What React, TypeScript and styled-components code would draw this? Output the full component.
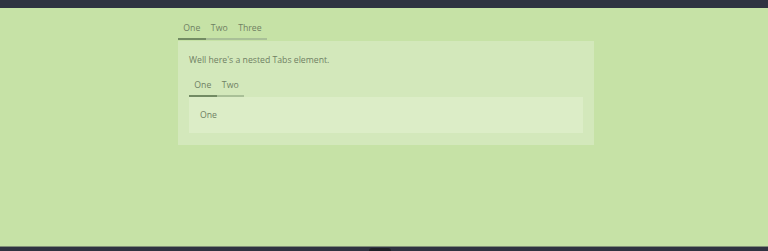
import React, { useState } from "react";
import styled, { createGlobalStyle } from "styled-components";

const GlobalStyle = createGlobalStyle`
  html, body {
    margin: 0;
    padding: 0;
    background: #c6e2a6;
  }
  body {
    font-family: "Open Sans", "Liberation Sans", sans-serif;
  }
`;

type TabsProps = {
  labels: string[];
  panels: React.ReactNode[];
  inner?: boolean;
};

const Tabs = ({ labels, panels, inner }: TabsProps) => {
  const [active, setActive] = useState(0);
  return (
    <TabsBox $inner={inner}>
      <TabList>
        {labels.map((label, i) => (
          <Tab key={label} $active={i === active} onClick={() => setActive(i)}>
            {label}
          </Tab>
        ))}
      </TabList>
      <Panel $inner={inner}>{panels[active]}</Panel>
    </TabsBox>
  );
};

const App = () => {
  return (
    <Page>
      <GlobalStyle />
      <TopBar />
      <Main>
        <Tabs
          labels={["One", "Two", "Three"]}
          panels={[
            <>
              <Text>Well here's a nested Tabs element.</Text>
              <Tabs
                inner
                labels={["One", "Two"]}
                panels={[<Text>One</Text>, <Text>Two</Text>]}
              />
            </>,
            <Text>Two</Text>,
            <Text>Three</Text>
          ]}
        />
      </Main>
      <BottomBar>
        <Handle />
      </BottomBar>
    </Page>
  );
};

const Page = styled.div`
  height: 100vh;
  display: flex;
  flex-direction: column;
  overflow: hidden;
`;

const TopBar = styled.div`
  height: 8px;
  background: #2f3341;
  flex-shrink: 0;
`;

const Main = styled.div`
  flex: 1;
  padding: 11px 0 0 178px;
`;

const BottomBar = styled.div`
  height: 4px;
  border-top: 1px solid #808f78;
  background: #2f3341;
  display: flex;
  justify-content: center;
  flex-shrink: 0;
`;

const Handle = styled.div`
  width: 22px;
  height: 3px;
  margin-top: 1px;
  margin-left: -8px;
  border-radius: 3px 3px 0 0;
  background: #1e2027;
`;

const TabsBox = styled.div<{ $inner?: boolean }>`
  display: flex;
  flex-direction: column;
  width: ${(p) => (p.$inner ? "auto" : "416px")};
`;

const TabList = styled.div`
  display: flex;
`;

const Tab = styled.div<{ $active: boolean }>`
  padding: 0 5.3px;
  line-height: 19px;
  font-size: 8.7px;
  color: #6f7f63;
  cursor: pointer;
  border-bottom: 2px solid ${(p) => (p.$active ? "#728b63" : "#a9c097")};
`;

const Panel = styled.div<{ $inner?: boolean }>`
  margin-top: ${(p) => (p.$inner ? "0" : "1px")};
  background: ${(p) => (p.$inner ? "#dcedc7" : "#d3e8bb")};
  padding: ${(p) => (p.$inner ? "10px 11px" : "11px 11px 12px")};
  display: flex;
  flex-direction: column;
  gap: 8px;
`;

const Text = styled.div`
  font-size: 8.7px;
  line-height: 16px;
  color: #6f7f63;
`;

export default App;
